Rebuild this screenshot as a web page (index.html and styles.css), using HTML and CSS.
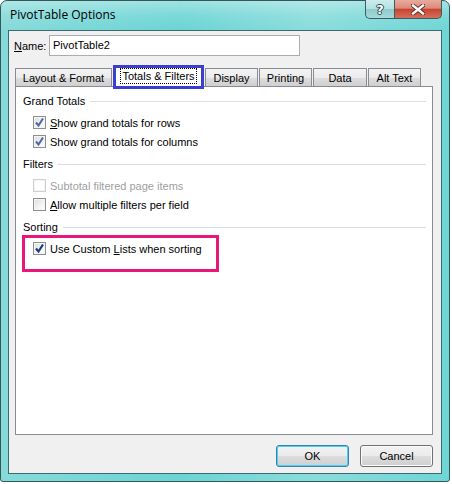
FILE: index.html
```html
<!DOCTYPE html>
<html>
<head>
  <meta charset="utf-8" />
  <title>PivotTable Options</title>
  <link rel="stylesheet" href="styles.css">
</head>
<body>
  <div class="window">
    <div class="titlebar">
      <span class="title">PivotTable Options</span>
      <div class="caption-btns">
        <span class="cbtn help">?</span>
        <span class="cbtn close">
          <svg width="14" height="11" viewBox="0 0 14 11"><path d="M2 1.5 L12 9.5 M12 1.5 L2 9.5" stroke="#5a2a22" stroke-width="4.2" stroke-linecap="square"/><path d="M2 1.5 L12 9.5 M12 1.5 L2 9.5" stroke="#fff" stroke-width="2.4" stroke-linecap="square"/></svg>
        </span>
      </div>
    </div>

    <div class="client">
      <div class="name-row">
        <label><u>N</u>ame:</label>
        <div class="input">PivotTable2</div>
      </div>

      <div class="tabs">
        <span class="tab w-layout">Layout &amp; Format</span>
        <span class="tab selected"><span class="focus">Totals &amp; Filters</span></span>
        <span class="tab w-display">Display</span>
        <span class="tab w-printing">Printing</span>
        <span class="tab w-data">Data</span>
        <span class="tab w-alt">Alt Text</span>
      </div>

      <div class="panel">
        <div class="group-head"><span>Grand Totals</span></div>
        <div class="check-row">
          <span class="box checked"><svg width="11" height="11" viewBox="0 0 11 11"><path d="M2 5.5 L4.5 8.5 L9 1.5" fill="none" stroke="#4d6aa8" stroke-width="2"/></svg></span>
          <span><u>S</u>how grand totals for rows</span>
        </div>
        <div class="check-row">
          <span class="box checked"><svg width="11" height="11" viewBox="0 0 11 11"><path d="M2 5.5 L4.5 8.5 L9 1.5" fill="none" stroke="#4d6aa8" stroke-width="2"/></svg></span>
          <span>Show <u>g</u>rand totals for columns</span>
        </div>

        <div class="group-head"><span>Filters</span></div>
        <div class="check-row disabled">
          <span class="box"></span>
          <span>Subtotal filtered page items</span>
        </div>
        <div class="check-row">
          <span class="box"></span>
          <span><u>A</u>llow multiple filters per field</span>
        </div>

        <div class="group-head"><span>Sorting</span></div>
        <div class="check-row marked">
          <span class="box checked"><svg width="11" height="11" viewBox="0 0 11 11"><path d="M2 5.5 L4.5 8.5 L9 1.5" fill="none" stroke="#1f3a7a" stroke-width="2.2"/></svg></span>
          <span>Use Custom <u>L</u>ists when sorting</span>
        </div>
      </div>

      <div class="buttons">
        <span class="btn default">OK</span>
        <span class="btn">Cancel</span>
      </div>
    </div>
  </div>
</body>
</html>
```

FILE: styles.css
```css
html, body {
  margin: 0;
  padding: 0;
  background: #fff;
}

* {
  box-sizing: border-box;
}

.window {
  width: 450px;
  height: 482px;
  display: flex;
  flex-direction: column;
  border: 1px solid #33575b;
  border-radius: 7px 7px 3px 3px;
  padding: 0 7px 7px 7px;
  background: linear-gradient(to right, #86dada 0%, #6cd4d4 40%, #8adcdc 70%, #6fd5d5 100%);
  font-family: "Liberation Sans", Arial, sans-serif;
  font-size: 11px;
  color: #000;
}

.titlebar {
  height: 29px;
  display: flex;
  align-items: flex-start;
  margin: 0 -7px;
  padding: 0 7px 0 9px;
  background: linear-gradient(to bottom, rgba(255,255,255,0.35) 0%, rgba(255,255,255,0.1) 50%, rgba(255,255,255,0) 100%);
  border-radius: 6px 6px 0 0;
}

.title {
  font-family: "Open Sans", "Noto Sans", sans-serif;
  font-size: 12px;
  line-height: 28px;
}

.caption-btns {
  margin-left: auto;
  display: flex;
  margin-top: -1px;
}

.cbtn {
  height: 19px;
  display: flex;
  align-items: center;
  justify-content: center;
  border: 1px solid #3a5d61;
  border-top: none;
}

.help {
  width: 29px;
  border-right: none;
  border-radius: 0 0 0 5px;
  background: linear-gradient(to bottom, #cdeced 0%, #b3e1e2 50%, #8fcccd 51%, #a6d9da 100%);
  color: #fff;
  font-family: "DejaVu Sans", sans-serif;
  font-weight: bold;
  font-size: 13px;
  text-shadow: 0 0 1px #2d4a50, 1px 0 0 #2d4a50, -1px 0 0 #2d4a50, 0 1px 0 #2d4a50, 0 -1px 0 #2d4a50;
}

.close {
  width: 48px;
  border-radius: 0 0 5px 0;
  background: linear-gradient(to bottom, #e8aa9e 0%, #dc8a7a 45%, #c8452e 52%, #d4705c 100%);
}

.client {
  flex: 1;
  display: flex;
  flex-direction: column;
  border: 1px solid #3d6a6e;
  background: #f0f0f0;
  padding: 4px 8px 6px 6px;
}

.name-row {
  height: 21px;
  display: flex;
  align-items: center;
  margin-left: -1px;
}

.name-row label {
  width: 35px;
}

.input {
  width: 251px;
  height: 21px;
  border: 1px solid #abadb3;
  background: #fff;
  padding: 0 3px;
  line-height: 19px;
}

.tabs {
  height: 21px;
  margin-top: 9px;
  display: flex;
  align-items: flex-end;
  position: relative;
  z-index: 1;
}

.tab {
  height: 18px;
  border: 1px solid #898c95;
  border-bottom: none;
  background: linear-gradient(to bottom, #f3f3f3 0%, #ebebeb 50%, #dddddd 51%, #cfcfcf 100%);
  text-align: center;
  line-height: 18px;
  margin-right: 1px;
}

.w-layout { width: 97px; margin-right: 1px; }
.w-display { width: 53px; }
.w-printing { width: 53px; }
.w-data { width: 54px; }
.w-alt { width: 53px; }

.tab.selected {
  width: 91px;
  height: 24px;
  margin-bottom: -3px;
  border: 3px solid #3b3fd0;
  background: #fff;
  display: flex;
  align-items: center;
  justify-content: center;
  line-height: 14px;
  padding-bottom: 2px;
}

.focus {
  border: 1px dotted #000;
  padding: 0 1px;
}

.panel {
  flex: 1;
  border: 1px solid #898c95;
  background: #fff;
  margin-right: 0;
  padding: 5px 6px 0 7px;
}

.group-head {
  height: 18px;
  display: flex;
  align-items: center;
  margin-top: 4px;
  margin-bottom: 3px;
}

.group-head:first-child {
  margin-top: 0;
}

.group-head::after {
  content: "";
  flex: 1;
  height: 1px;
  background: #d5dfe5;
  margin-left: 5px;
  margin-top: 1px;
}

.check-row {
  height: 19px;
  display: flex;
  align-items: center;
  padding-left: 10px;
  position: relative;
}

.box {
  width: 13px;
  height: 13px;
  border: 1px solid #8e8f8f;
  background: linear-gradient(135deg, #dcdcdc 0%, #f4f4f4 60%, #fff 100%);
  box-shadow: inset 0 0 0 1px #f4f4f4;
  margin-right: 4px;
  display: flex;
  align-items: center;
  justify-content: center;
}

.disabled {
  color: #a0a0a0;
}

.disabled .box {
  border-color: #cfcfcf;
  background: #fff;
  box-shadow: inset 0 0 0 1px #f4f4f4;
}

.marked::after {
  content: "";
  position: absolute;
  left: -1px;
  top: -4px;
  width: 191px;
  height: 31px;
  border: 3px solid #e8187b;
}

.buttons {
  display: flex;
  justify-content: flex-end;
  gap: 11px;
  margin-top: 10px;
}

.btn {
  width: 73px;
  height: 22px;
  border: 1px solid #707070;
  border-radius: 3px;
  background: linear-gradient(to bottom, #f2f2f2 0%, #ebebeb 50%, #dddddd 51%, #cfcfcf 100%);
  box-shadow: inset 0 0 0 1px #fcfcfc;
  text-align: center;
  line-height: 20px;
}

.btn.default {
  border-color: #3c7fb1;
  box-shadow: inset 0 0 0 1px #48d0f7;
  background: linear-gradient(to bottom, #eaf6fd 0%, #d9f0fc 50%, #bee6fd 51%, #a7d9f5 100%);
  background: linear-gradient(to bottom, #f2f2f2 0%, #ebebeb 50%, #dddddd 51%, #cfcfcf 100%);
}
```
